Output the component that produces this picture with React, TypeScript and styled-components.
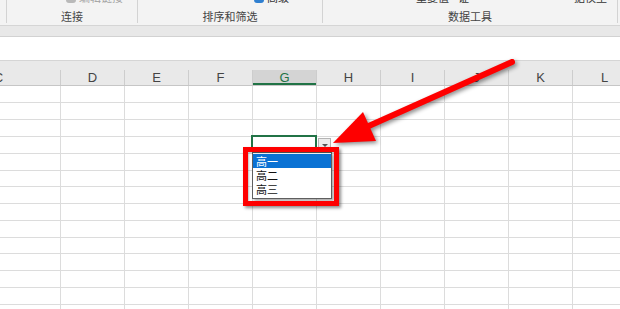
import React from "react";
import styled, { createGlobalStyle } from "styled-components";

const GlobalStyle = createGlobalStyle`
  html, body { margin: 0; padding: 0; background: #fff; overflow: hidden; }
  body { font-family: "Noto Sans CJK SC", "Liberation Sans", sans-serif; }
`;

const Page = styled.div`
  position: relative;
  width: 620px;
  height: 309px;
  overflow: hidden;
  background: #fff;
`;

const Ribbon = styled.div`
  display: flex;
  align-items: flex-start;
  height: 25px;
  background: #f3f3f3;
  border-bottom: 1px solid #d5d5d5;
`;

const Group = styled.div<{ $w?: number; $last?: boolean }>`
  flex: ${(p) => (p.$w ? "none" : "1")};
  width: ${(p) => (p.$w ? `${p.$w}px` : "auto")};
  height: 23px;
  display: flex;
  flex-direction: column;
  border-right: ${(p) => (p.$last ? "none" : "1px solid #d3d3d3")};
`;

const ClipRow = styled.div<{ $pad: number }>`
  height: 4px;
  overflow: hidden;
  display: flex;
  align-items: flex-start;
  gap: 3px;
  padding-left: ${(p) => p.$pad}px;
  white-space: nowrap;
`;

const ClipText = styled.span<{ $c?: string; $ml?: number }>`
  margin-top: -10px;
  margin-left: ${(p) => p.$ml ?? 0}px;
  font-size: 11px;
  line-height: 14px;
  color: ${(p) => p.$c ?? "#333"};
`;

const ClipIcon = styled.span<{ $c: string }>`
  margin-top: -8px;
  width: 10px;
  height: 11px;
  border-radius: 3px;
  background: ${(p) => p.$c};
  flex: none;
`;

const GroupLabel = styled.div`
  margin-top: 6px;
  text-align: center;
  font-size: 11px;
  line-height: 14px;
  color: #444;
`;

const Band = styled.div`
  height: 10px;
  background: #e8e8e8;
  border-bottom: 1px solid #d2d2d2;
`;

const FormulaBar = styled.div`
  height: 23px;
  background: #fff;
  border-bottom: 1px solid #d5d5d5;
`;

const COLS = "124px repeat(9, 64px)";

const Sheet = styled.div`
  margin-left: -63px;
  width: 700px;
`;

const HeaderRow = styled.div`
  display: grid;
  grid-template-columns: ${COLS};
  background: #e9e9e9;
  padding-top: 9px;
  border-bottom: 1px solid #c6c6c6;
`;

const HeaderCell = styled.div<{ $sel?: boolean }>`
  height: 15px;
  display: flex;
  align-items: center;
  justify-content: center;
  border-right: 1px solid #cdcdcd;
  font-family: "Liberation Sans", Arial, sans-serif;
  font-size: 13px;
  line-height: 15px;
  color: ${(p) => (p.$sel ? "#217346" : "#444")};
  background: ${(p) => (p.$sel ? "#d4d4d4" : "transparent")};
  box-shadow: ${(p) => (p.$sel ? "inset 0 -2px 0 #217346" : "none")};
`;

const BodyRow = styled.div<{ $h: number }>`
  display: grid;
  grid-template-columns: ${COLS};
  height: ${(p) => p.$h}px;
`;

const Cell = styled.div`
  position: relative;
  border-right: 1px solid #dcdcdc;
  border-bottom: 1px solid #dcdcdc;
`;

const Selection = styled.div`
  position: absolute;
  left: -2px;
  top: -2px;
  width: 66px;
  height: 17px;
  box-sizing: border-box;
  border: 2px solid #217346;
  pointer-events: none;
`;

const FillHandle = styled.div`
  position: absolute;
  left: 61px;
  top: 12px;
  width: 4px;
  height: 4px;
  background: #217346;
  border: 1px solid #fff;
`;

const DropButton = styled.div`
  position: absolute;
  left: 65px;
  top: 1px;
  width: 13px;
  height: 13px;
  box-sizing: border-box;
  background: #ececec;
  border: 1px solid #b4b4b4;
  display: flex;
  align-items: center;
  justify-content: center;
  &::before {
    content: "";
    border-left: 3px solid transparent;
    border-right: 3px solid transparent;
    border-top: 3px solid #555;
    margin-top: 1px;
  }
`;

const ListBox = styled.div`
  position: absolute;
  left: -1px;
  top: 15px;
  width: 80px;
  height: 47px;
  box-sizing: border-box;
  background: #fff;
  border: 1px solid #5f5f5f;
  box-shadow: 2px 2px 3px rgba(0, 0, 0, 0.35);
  padding-top: 1px;
  z-index: 2;
`;

const ListItem = styled.div<{ $sel?: boolean }>`
  height: 14px;
  line-height: 14px;
  padding-left: 3px;
  font-size: 11px;
  color: ${(p) => (p.$sel ? "#fff" : "#111")};
  background: ${(p) => (p.$sel ? "#0a72d4" : "transparent")};
`;

const RedBox = styled.div`
  position: absolute;
  left: -10px;
  top: 10px;
  width: 96px;
  height: 59px;
  box-sizing: border-box;
  border: 5px solid #fe0000;
  box-shadow: 2px 2px 3px rgba(0, 0, 0, 0.45), inset 1px 1px 2px rgba(0, 0, 0, 0.25);
  z-index: 3;
  pointer-events: none;
`;

const ArrowLayer = styled.svg`
  position: absolute;
  left: 0;
  top: 0;
  width: 620px;
  height: 309px;
  pointer-events: none;
  z-index: 4;
  filter: drop-shadow(2px 2px 2px rgba(0, 0, 0, 0.45));
`;

const columns = ["C", "D", "E", "F", "G", "H", "I", "J", "K", "L"];
const rowHeights = [17, 17, 17, 17, 17, 16, 17, 17, 17, 16, 17, 17, 17, 17];
const options = ["高一", "高二", "高三"];

export default function App() {
  return (
    <Page>
      <GlobalStyle />
      <Ribbon>
        <Group $w={6} />
        <Group $w={130}>
          <ClipRow $pad={59}>
            <ClipIcon $c="#b9b9b9" />
            <ClipText $c="#a3a3a3">编辑链接</ClipText>
          </ClipRow>
          <GroupLabel>连接</GroupLabel>
        </Group>
        <Group $w={184}>
          <ClipRow $pad={116}>
            <ClipIcon $c="#2f7fd0" />
            <ClipText>高级</ClipText>
          </ClipRow>
          <GroupLabel>排序和筛选</GroupLabel>
        </Group>
        <Group $w={294}>
          <ClipRow $pad={93}>
            <ClipText>重复值</ClipText>
            <ClipText $ml={6}>证</ClipText>
            <ClipText $ml={102}>据模型</ClipText>
          </ClipRow>
          <GroupLabel>数据工具</GroupLabel>
        </Group>
        <Group $last />
      </Ribbon>
      <Band />
      <FormulaBar />
      <Sheet>
        <HeaderRow>
          {columns.map((c) => (
            <HeaderCell key={c} $sel={c === "G"}>
              {c}
            </HeaderCell>
          ))}
        </HeaderRow>
        {rowHeights.map((h, r) => (
          <BodyRow key={r} $h={h}>
            {columns.map((c) => (
              <Cell key={c}>
                {r === 3 && c === "G" && (
                  <>
                    <Selection />
                    <FillHandle />
                    <DropButton />
                    <ListBox>
                      {options.map((o, i) => (
                        <ListItem key={o} $sel={i === 0}>
                          {o}
                        </ListItem>
                      ))}
                    </ListBox>
                    <RedBox />
                  </>
                )}
              </Cell>
            ))}
          </BodyRow>
        ))}
      </Sheet>
      <ArrowLayer viewBox="0 0 620 309">
        <line x1="512" y1="62" x2="362" y2="129" stroke="#fe0000" strokeWidth="6" strokeLinecap="round" />
        <polygon points="333,143 363,112 376,141" fill="#fe0000" />
      </ArrowLayer>
    </Page>
  );
}
